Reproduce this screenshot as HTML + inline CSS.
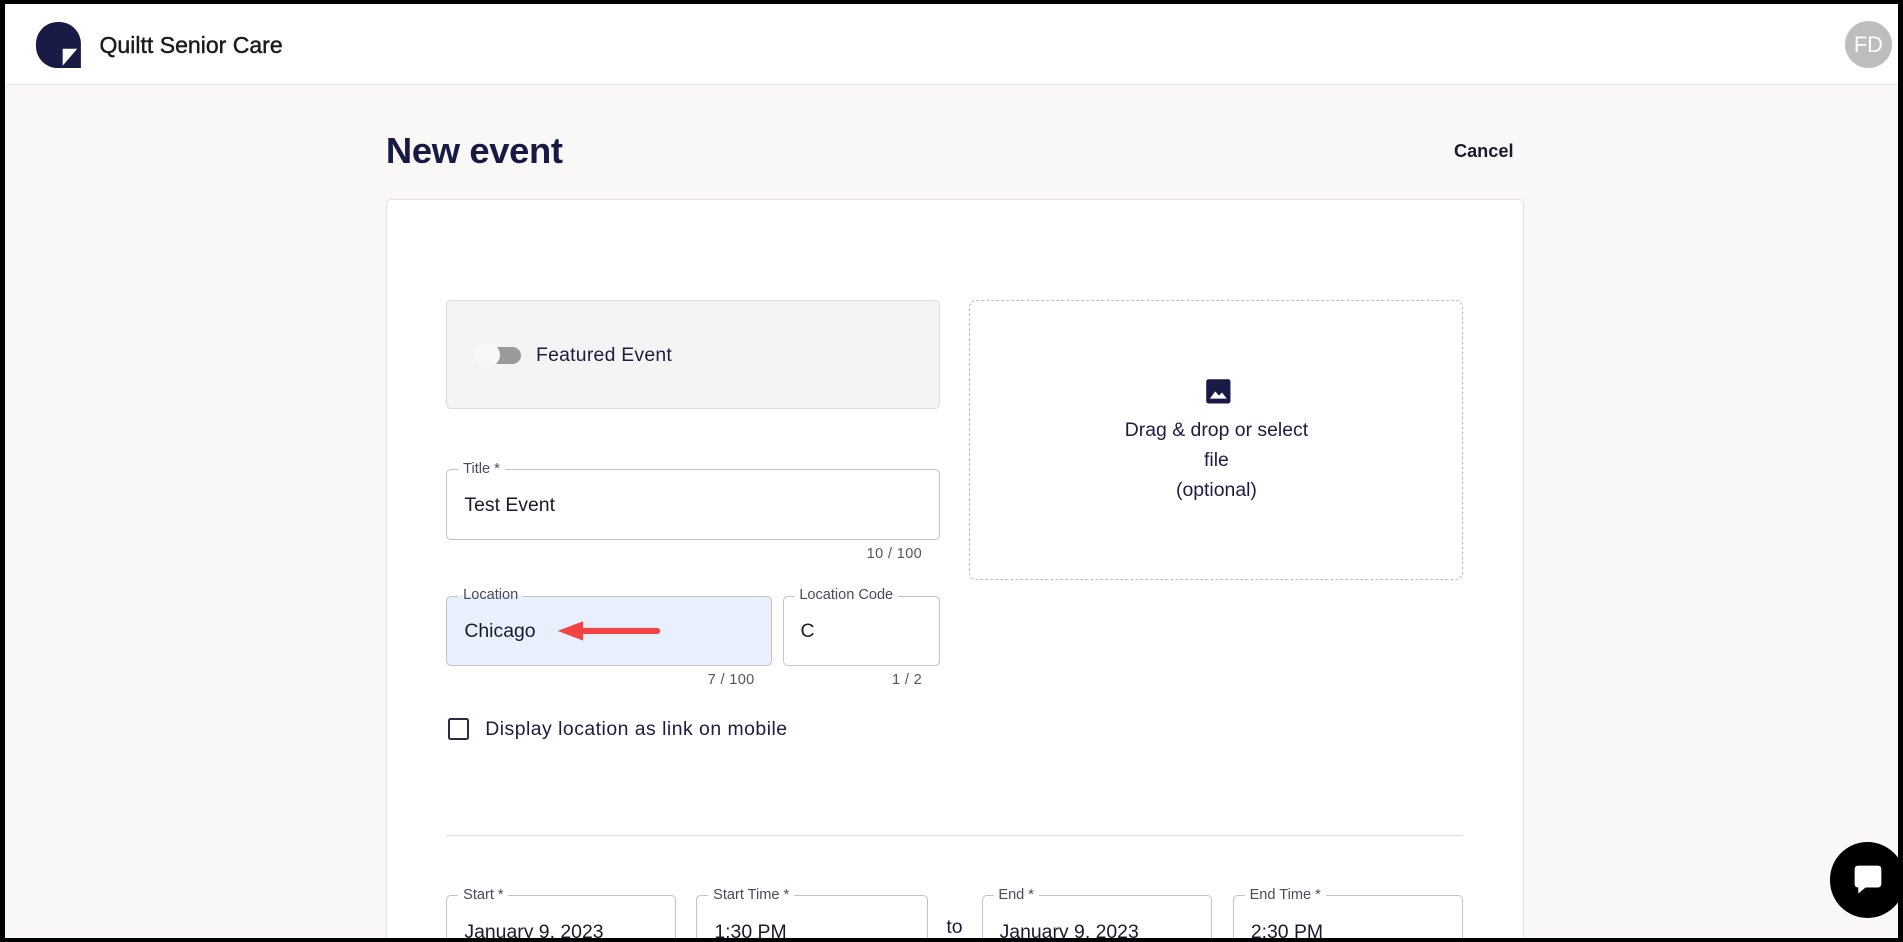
<!DOCTYPE html>
<html><head><meta charset="utf-8"><style>
*{box-sizing:border-box;margin:0;padding:0}
html,body{width:1903px;height:942px;overflow:hidden;background:#000}
#w{zoom:1.21365;width:1568px;height:776px;position:relative;overflow:hidden;background:#000;font-family:"Liberation Sans",Arial,sans-serif;color:#1c1c45}
#page{position:absolute;left:4px;top:3px;width:1560px;height:770px;background:#f9f8f7;overflow:hidden}
.a{position:absolute}
#hdr{left:0;top:0;width:1560px;height:67px;background:#fff;border-bottom:1px solid #e6e6e6}
.card{left:314px;top:161px;width:938px;height:640px;background:#fff;border:1px solid #e3e3e3;border-radius:4px}
.fld{position:absolute;border:1px solid #c4c4c4;border-radius:4px;background:#fff}
.lbl{position:absolute;top:-8px;left:9px;padding:0 4px;background:#fff;font-size:12px;color:#4a4a5e;line-height:14px}
.val{position:absolute;left:14px;top:19px;font-size:16px;color:#1a1a2e}
.cnt{position:absolute;font-size:12px;color:#555;text-align:right;letter-spacing:.3px}
</style></head><body><div id="w"><div id="page">
<div class="a" id="hdr">
 <svg class="a" style="left:26px;top:15px" width="37" height="38" viewBox="0 0 37 38"><path d="M18,0 A18,18 0 0 0 0,19 A18,18 0 0 0 18,38 L37,38 L37,19 A18,18 0 0 0 18,0Z" fill="#1a1a47"/><path d="M22,22 L34,22 L22,36Z" fill="#fff"/></svg>
 <div class="a" style="left:78px;top:23px;font-size:19px;color:#1a1a1a;-webkit-text-stroke:.35px #1a1a1a">Quiltt Senior Care</div>
 <div class="a" style="left:1516px;top:14px;width:39px;height:39px;border-radius:50%;background:#bdbdbd;color:#fff;font-size:18px;text-align:center;line-height:39px">FD</div>
</div>
<div class="a" style="left:314px;top:104px;font-size:30px;font-weight:700;color:#171a45;letter-spacing:-.3px">New event</div>
<div class="a" style="left:1194px;top:113px;font-size:15px;font-weight:700;color:#1a1a2e">Cancel</div>
<div class="a card">
 <div class="a" style="left:49px;top:82px;width:407px;height:90px;background:#f4f4f4;border:1px solid #ddd;border-radius:4px">
  <div class="a" style="left:27px;top:38px;width:34px;height:14px;border-radius:7px;background:#9a9a9a"></div>
  <div class="a" style="left:23px;top:35px;width:20px;height:20px;border-radius:50%;background:#f7f7f7"></div>
  <div class="a" style="left:73px;top:36px;font-size:16px;color:#1c1c45;letter-spacing:.2px">Featured Event</div>
 </div>
 <div class="a" style="left:480px;top:82px;width:407px;height:231px;border:1px dashed #bdbdbd;border-radius:6px;text-align:center;font-size:16px;line-height:25px;color:#1c1c45">
  <svg style="position:absolute;left:193px;top:64px" width="22" height="22" viewBox="0 0 22 22"><rect x="1" y="1" width="20" height="20" rx="2" fill="#1a1a47"/><path d="M4,17 L8.5,11 L11.5,14.5 L14,12 L18,17Z" fill="#fff"/></svg>
  <div style="position:absolute;left:0;right:0;top:94px">Drag &amp; drop or select<br>file<br>(optional)</div>
 </div>
 <div class="fld" style="left:49px;top:222px;width:407px;height:58px"><div class="lbl">Title *</div><div class="val">Test Event</div></div>
 <div class="cnt" style="left:340px;top:285px;width:101px">10 / 100</div>
 <div class="fld" style="left:49px;top:326px;width:268px;height:58px;background:#e8f0fe"><div class="lbl" style="background:linear-gradient(#fff 50%,#e8f0fe 50%)">Location</div><div class="val">Chicago</div>
  <svg class="a" style="left:88px;top:19px" width="90" height="18" viewBox="0 0 90 18"><path d="M20,9 L85,9" stroke="#f24444" stroke-width="5" stroke-linecap="round"/><path d="M3,9 L24,1 L24,17Z" fill="#f24444"/></svg>
 </div>
 <div class="cnt" style="left:200px;top:389px;width:103px">7 / 100</div>
 <div class="fld" style="left:326px;top:326px;width:130px;height:58px"><div class="lbl">Location Code</div><div class="val">C</div></div>
 <div class="cnt" style="left:380px;top:389px;width:61px">1 / 2</div>
 <div class="a" style="left:50px;top:427px;width:18px;height:18px;border:2px solid #2b2b45;border-radius:2px"></div>
 <div class="a" style="left:81px;top:427px;font-size:16px;color:#1c1c45;letter-spacing:.4px">Display location as link on mobile</div>
 <div class="a" style="left:49px;top:523px;width:838px;height:1px;background:#e0e0e0"></div>
 <div class="fld" style="left:49px;top:573px;width:189px;height:60px"><div class="lbl">Start *</div><div class="val" style="top:20px">January 9, 2023</div></div>
 <div class="fld" style="left:255px;top:573px;width:191px;height:60px"><div class="lbl">Start Time *</div><div class="val" style="top:20px">1:30 PM</div></div>
 <div class="a" style="left:461px;top:590px;font-size:16px;color:#1c1c45">to</div>
 <div class="fld" style="left:490px;top:573px;width:190px;height:60px"><div class="lbl">End *</div><div class="val" style="top:20px">January 9, 2023</div></div>
 <div class="fld" style="left:697px;top:573px;width:190px;height:60px"><div class="lbl">End Time *</div><div class="val" style="top:20px">2:30 PM</div></div>
</div>
<div class="a" style="left:1504px;top:691px;width:62px;height:62px;border-radius:50%;background:#000">
 <svg class="a" style="left:17px;top:16px" width="28" height="30" viewBox="0 0 28 30"><path d="M6,3 H22 Q25,3 25,6 V18 Q25,21 22,21 H12 L6,26 V21 Q3,21 3,18 V6 Q3,3 6,3Z" fill="#fff"/></svg>
</div>
</div></div></body></html>
